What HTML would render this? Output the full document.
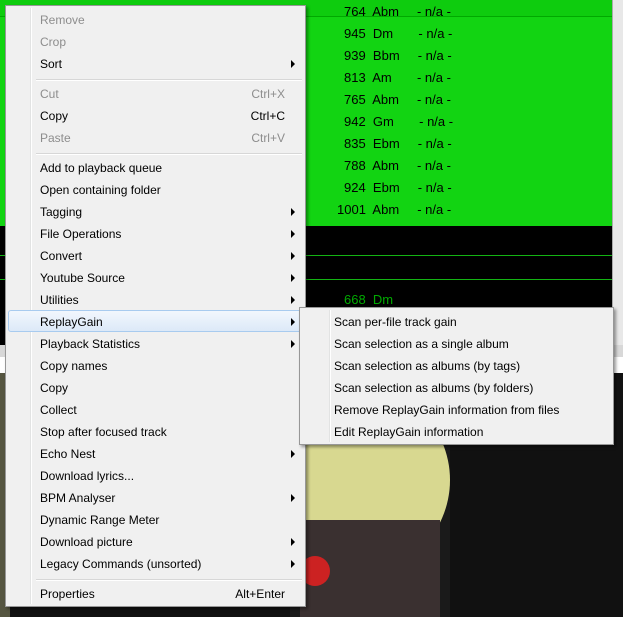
<!DOCTYPE html>
<html><head><style>
body{margin:0;width:623px;height:617px;overflow:hidden;background:#111;position:relative;font-family:"Liberation Sans",sans-serif;font-size:12px}
.a{position:absolute}
.menu{position:absolute;background:#f0f0f0;border:1px solid #979797;box-shadow:2px 2px 3px rgba(0,0,0,.4)}
.it{position:absolute;left:0;right:0;height:22px;line-height:22px;color:#000}
.it span{position:absolute;left:34px}
.dis{color:#8d8d8d}
.sc{position:absolute;right:20px;left:auto!important}
.ar{position:absolute;right:10px;top:7px;width:0;height:0;border-left:4px solid #000;border-top:4px solid transparent;border-bottom:4px solid transparent}
.sep{position:absolute;left:30px;right:3px;height:1px;background:#d7d7d7;border-bottom:1px solid #fff}
.g{position:absolute;color:#0a0;font-size:13px}
</style></head><body>
<!-- background -->
<div class="a" style="left:0;top:0;width:612px;height:226px;background:#12d412"></div>
<div class="a" style="left:0;top:0;width:612px;height:16px;background:#0ecc0e;border-bottom:1px solid #0a0"></div>
<div class="a" style="left:0;top:226px;width:612px;height:120px;background:#000"></div>
<div class="a" style="left:0;top:255px;width:612px;height:1px;background:#13b313"></div>
<div class="a" style="left:0;top:279px;width:612px;height:1px;background:#13b313"></div>
<div class="a" style="left:612px;top:0;width:11px;height:345px;background:#e8e8e8;border-left:1px solid #aaa"></div>
<div class="a" style="left:0;top:345px;width:623px;height:12px;background:#d8d8d8"></div>
<div class="a" style="left:0;top:357px;width:623px;height:16px;background:#fff"></div>
<div class="a" style="left:290px;top:373px;width:160px;height:244px;background:#1a1a1a"></div>
<div class="a" style="left:240px;top:380px;width:210px;height:200px;border-radius:50%;background:#d8d890"></div>
<div class="a" style="left:300px;top:520px;width:140px;height:97px;background:#3a3030"></div>
<div class="a" style="left:300px;top:556px;width:30px;height:30px;border-radius:50%;background:#c22"></div>
<div class="a" style="left:0;top:373px;width:10px;height:244px;background:#555540"></div>
<div class="g" style="left:344px;top:4px;color:#000">764&nbsp; Abm&nbsp;&nbsp;&nbsp;&nbsp; - n/a -</div>
<div class="g" style="left:344px;top:26px;color:#000">945&nbsp; Dm&nbsp;&nbsp;&nbsp;&nbsp;&nbsp;&nbsp; - n/a -</div>
<div class="g" style="left:344px;top:48px;color:#000">939&nbsp; Bbm&nbsp;&nbsp;&nbsp;&nbsp; - n/a -</div>
<div class="g" style="left:344px;top:70px;color:#000">813&nbsp; Am&nbsp;&nbsp;&nbsp;&nbsp;&nbsp;&nbsp; - n/a -</div>
<div class="g" style="left:344px;top:92px;color:#000">765&nbsp; Abm&nbsp;&nbsp;&nbsp;&nbsp; - n/a -</div>
<div class="g" style="left:344px;top:114px;color:#000">942&nbsp; Gm&nbsp;&nbsp;&nbsp;&nbsp;&nbsp;&nbsp; - n/a -</div>
<div class="g" style="left:344px;top:136px;color:#000">835&nbsp; Ebm&nbsp;&nbsp;&nbsp;&nbsp; - n/a -</div>
<div class="g" style="left:344px;top:158px;color:#000">788&nbsp; Abm&nbsp;&nbsp;&nbsp;&nbsp; - n/a -</div>
<div class="g" style="left:344px;top:180px;color:#000">924&nbsp; Ebm&nbsp;&nbsp;&nbsp;&nbsp; - n/a -</div>
<div class="g" style="left:337px;top:202px;color:#000">1001&nbsp; Abm&nbsp;&nbsp;&nbsp;&nbsp; - n/a -</div>
<div class="g" style="left:344px;top:292px;">668&nbsp; Dm</div>
<!-- main menu -->
<div class="menu" style="left:5px;top:5px;width:299px;height:600px">
<div class="a" style="left:24px;top:2px;width:1px;height:596px;background:#e2e3e3;border-right:1px solid #fff"></div>
<div class="it dis" style="top:3px"><span>Remove</span></div>
<div class="it dis" style="top:25px"><span>Crop</span></div>
<div class="it" style="top:47px"><span>Sort</span><i class="ar"></i></div>
<div class="sep" style="top:73px"></div>
<div class="it dis" style="top:77px"><span>Cut</span><span class="sc">Ctrl+X</span></div>
<div class="it" style="top:99px"><span>Copy</span><span class="sc">Ctrl+C</span></div>
<div class="it dis" style="top:121px"><span>Paste</span><span class="sc">Ctrl+V</span></div>
<div class="sep" style="top:147px"></div>
<div class="it" style="top:151px"><span>Add to playback queue</span></div>
<div class="it" style="top:173px"><span>Open containing folder</span></div>
<div class="it" style="top:195px"><span>Tagging</span><i class="ar"></i></div>
<div class="it" style="top:217px"><span>File Operations</span><i class="ar"></i></div>
<div class="it" style="top:239px"><span>Convert</span><i class="ar"></i></div>
<div class="it" style="top:261px"><span>Youtube Source</span><i class="ar"></i></div>
<div class="it" style="top:283px"><span>Utilities</span><i class="ar"></i></div>
<div class="a" style="left:2px;top:304px;width:293px;height:20px;border:1px solid #a8cbef;border-radius:3px;background:linear-gradient(#f2f7fd,#dce9f8)"></div>
<div class="it" style="top:305px"><span>ReplayGain</span><i class="ar"></i></div>
<div class="it" style="top:327px"><span>Playback Statistics</span><i class="ar"></i></div>
<div class="it" style="top:349px"><span>Copy names</span></div>
<div class="it" style="top:371px"><span>Copy</span></div>
<div class="it" style="top:393px"><span>Collect</span></div>
<div class="it" style="top:415px"><span>Stop after focused track</span></div>
<div class="it" style="top:437px"><span>Echo Nest</span><i class="ar"></i></div>
<div class="it" style="top:459px"><span>Download lyrics...</span></div>
<div class="it" style="top:481px"><span>BPM Analyser</span><i class="ar"></i></div>
<div class="it" style="top:503px"><span>Dynamic Range Meter</span></div>
<div class="it" style="top:525px"><span>Download picture</span><i class="ar"></i></div>
<div class="it" style="top:547px"><span>Legacy Commands (unsorted)</span><i class="ar"></i></div>
<div class="sep" style="top:573px"></div>
<div class="it" style="top:577px"><span>Properties</span><span class="sc">Alt+Enter</span></div>
</div>
<!-- submenu -->
<div class="menu" style="left:299px;top:307px;width:313px;height:136px">
<div class="a" style="left:29px;top:2px;width:1px;height:132px;background:#e2e3e3;border-right:1px solid #fff"></div>
<div class="it" style="top:3px"><span style="left:34px">Scan per-file track gain</span></div>
<div class="it" style="top:25px"><span style="left:34px">Scan selection as a single album</span></div>
<div class="it" style="top:47px"><span style="left:34px">Scan selection as albums (by tags)</span></div>
<div class="it" style="top:69px"><span style="left:34px">Scan selection as albums (by folders)</span></div>
<div class="it" style="top:91px"><span style="left:34px">Remove ReplayGain information from files</span></div>
<div class="it" style="top:113px"><span style="left:34px">Edit ReplayGain information</span></div>
</div>
</body></html>
